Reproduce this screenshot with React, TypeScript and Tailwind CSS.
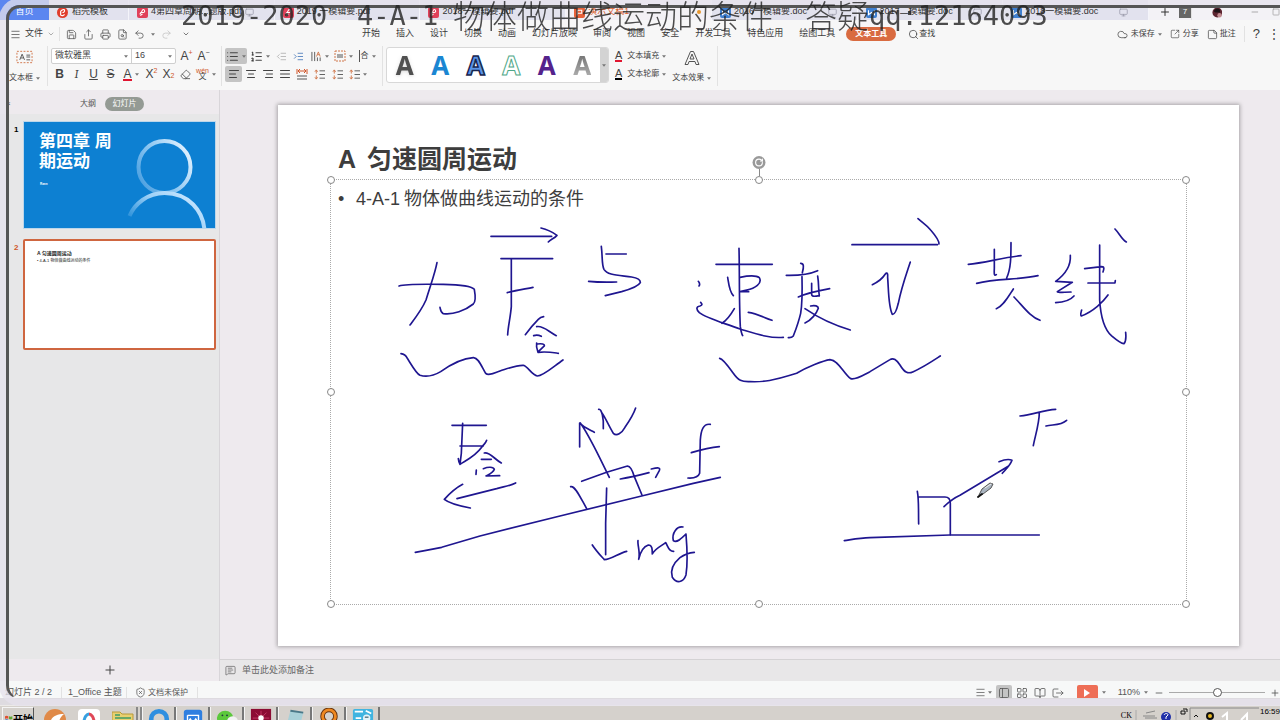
import React, { useState } from "react";
import {
    AlignCenter,
    AlignJustify,
    AlignLeft,
    AlignRight,
    BookOpen,
    ChevronDown,
    Cloud,
    Eraser,
    FileSearch,
    IndentDecrease,
    IndentIncrease,
    LayoutGrid,
    List,
    ListOrdered,
    Menu,
    MessageSquareText,
    Minus,
    Monitor,
    PanelLeft,
    Plus,
    Printer,
    Redo2,
    RotateCw,
    Save,
    Search,
    Share,
    ShieldX,
    Square,
    SquareArrowOutUpRight,
    StickyNote,
    Undo2,
} from "lucide-react";

const DOC_TABS = [
    { kind: "pdf", label: "4第四章周期...题版.pdf", monitor: true },
    { kind: "pdf", label: "2019 一模辑要.pdf", monitor: false },
    { kind: "pdf", label: "2018一模辑要.pdf", monitor: false },
    { kind: "ppt", label: "演示文稿1", monitor: false },
    { kind: "doc", label: "2016一模辑要.doc", monitor: true },
    { kind: "doc", label: "2017二模辑要.doc", monitor: true },
    { kind: "doc", label: "2018一模辑要.doc", monitor: true },
];

const MENUS = [
    "开始", "插入", "设计", "切换", "动画", "幻灯片放映",
    "审阅", "视图", "安全", "开发工具", "特色应用", "绘图工具",
];

const KIND_COLORS: Record<string, string> = {
    pdf: "bg-[#e0405a]",
    ppt: "bg-[#e8623a]",
    doc: "bg-[#3f7fd0]",
};

// Pen strokes, one entry per written area of the slide
const INK = [
    {
        at: "translate(320 140) scale(0.3333)",
        d: [
            "M513 289H695M663 264C680 268 700 278 711 286C702 296 692 298 685 306",
            "M351 368C345 400 335 425 318 480C305 510 285 535 270 555",
            "M237 438C260 431 300 433 370 433C420 434 455 438 463 448C467 470 467 485 460 492C435 512 400 525 370 521C362 517 362 512 360 502",
            "M543 356H698M574 357V500C571 535 564 560 563 585M562 458C590 450 615 447 639 442",
            "M844 319C848 350 845 375 852 388C862 405 890 405 935 411C955 414 962 420 961 428C955 440 930 448 905 455L856 467M858 342H919M806 424C835 427 860 427 890 426",
            "M616 584C630 565 640 553 655 538C660 533 665 531 671 530M650 560C670 556 685 575 709 587M641 587C650 584 658 586 664 589M650 609C648 620 652 632 654 637M652 612C665 610 675 612 673 618L656 634M655 637C680 634 695 637 715 640",
            "M243 641C252 642 257 645 262 655C275 675 288 700 300 706C320 712 340 708 362 695C390 675 430 655 460 653C475 652 485 680 497 700C505 708 520 700 540 693C565 685 590 675 610 676C625 680 635 705 652 708C670 708 700 680 729 660",
        ],
    },
    {
        at: "translate(640 140) scale(0.3333)",
        d: [
            "M636 314H892M834 236C850 250 860 255 872 270C885 285 898 300 897 312",
            "M175 424C180 430 180 434 177 438M182 487C187 492 188 496 180 498C168 500 168 508 178 518C200 535 240 545 300 567C350 582 390 596 430 592",
            "M228 373H397M297 325C299 400 297 480 301 560C303 575 305 582 308 587",
            "M263 412C266 430 268 455 280 467M300 412C320 408 345 403 358 413C368 430 345 445 320 450L300 455L326 455M283 506C275 520 262 540 246 550M325 517C350 520 370 532 396 541",
            "M482 370C492 370 492 380 487 398M439 406C480 407 510 402 533 392M486 410C487 450 487 490 482 520C475 550 465 575 460 588C455 594 450 593 445 593",
            "M515 430V460C514 470 520 470 538 467M533 408C537 430 535 450 538 468M475 471C500 460 535 452 569 446M512 498C525 495 535 498 535 505C530 520 515 540 495 549M495 506C530 530 580 555 631 570",
            "M697 434C712 427 728 415 736 402C742 396 744 400 743 412C746 450 745 500 757 523C765 525 770 510 775 490C785 440 800 400 811 366",
            "M239 655C250 657 262 675 280 700C295 722 305 726 330 725C370 727 400 722 470 700C500 682 550 662 570 659C595 660 610 700 632 716C650 720 670 705 690 695L750 659C760 652 770 660 780 675C795 700 805 702 820 695C850 682 875 665 901 648",
        ],
    },
    {
        at: "translate(930 200) scale(0.3333)",
        d: [
            "M115 193C160 190 220 172 273 167M193 148V205C192 225 193 228 199 224M243 128C243 170 243 205 230 234M140 250C200 235 270 240 324 227M250 267C235 290 220 318 199 326M252 291C280 320 300 350 330 361",
            "M421 166C423 195 410 220 377 244L427 247L382 275C385 279 395 277 423 276M377 308C400 307 420 302 432 288",
            "M464 206L515 200C524 200 522 208 519 216M474 249H555L556 242M509 135V300C512 350 525 390 545 408C565 425 575 432 582 431C590 422 588 410 587 397M534 285C520 305 490 335 454 348C450 345 453 338 455 330M555 87C568 100 575 118 589 126",
        ],
    },
    {
        at: "translate(400 390) scale(0.3333)",
        d: [
            "M156 106H259M188 100L184 190L180 223M175 206C176 215 178 220 180 223C200 210 225 200 245 172C252 162 257 160 260 151M180 168H250M253 189C270 186 280 205 304 219M244 208H274M229 240L228 253M250 236C265 230 280 230 283 238C280 248 270 252 258 258L299 257",
            "M347 279C330 288 310 290 290 296L171 326M188 283C165 295 145 315 133 328C150 342 180 348 211 354",
            "M46 487C70 482 90 480 125 472L240 438L480 378L725 318L880 280L961 262",
            "M628 262L600 205C580 165 560 125 541 99M539 171V99C555 115 570 120 583 127",
            "M596 58C605 55 612 85 610 116M604 66C615 80 625 105 640 130C650 140 665 130 675 112C690 90 700 75 707 54",
            "M545 274L620 247L680 229C690 226 697 240 703 260L726 315M512 290C525 286 540 320 560 356M661 267C690 262 720 255 747 248M754 237C775 232 782 232 778 242L767 262",
            "M620 294L617 400V494M577 465C590 485 605 500 613 509C635 508 655 490 680 484",
            "M714 452C712 465 722 490 716 508C720 490 730 470 745 465C757 465 757 478 757 492C765 475 785 468 797 458C803 465 805 485 821 484",
            "M849 411C830 408 815 430 820 452C830 460 845 445 858 432C862 480 862 530 858 555C850 578 830 582 817 562C810 540 820 520 840 503C855 492 870 488 883 487",
            "M931 103C910 100 903 120 901 150L899 250C895 262 880 265 864 264M874 188C900 180 930 172 958 170",
        ],
    },
    {
        at: "translate(820 390) scale(0.3333)",
        d: [
            "M600 78C640 74 670 60 707 58M658 68C658 100 645 140 640 167M678 108C700 103 722 107 740 91",
            "M372 350C390 333 400 325 420 316L480 280L566 228M537 215C555 208 570 208 576 211C570 228 557 238 547 250",
            "M292 304C297 330 295 360 296 402M296 321H375C388 321 391 330 391 340V434",
            "M73 452C100 448 120 444 150 443L390 435H658",
        ],
    },
];

const Caret = () => (
    <svg viewBox="0 0 6 4" className="w-1 h-[3px] shrink-0" fill="#777">
        <path d="M0 0h6L3 4z" />
    </svg>
);

const Divider = () => <span className="w-px self-stretch bg-[#e2e2e2] shrink-0" />;

const WpsMark = ({ kind }: { kind: string }) => (
    <span className={`w-[11px] h-[11px] rounded-[2px] flex items-center justify-center shrink-0 ${KIND_COLORS[kind]}`}>
        <svg viewBox="0 0 12 12" className="w-[9px] h-[9px]" fill="none" stroke="#fff" strokeWidth="1.4">
            {kind === "doc" ? (
                <path d="M2 3v6l4-3 4 3V3" />
            ) : kind === "ppt" ? (
                <path d="M3 10V3h6v4H3" />
            ) : (
                <path d="M2 8c3 0 3-6 5-6s3 4 0 4H3M3 10l3-2" />
            )}
        </svg>
    </span>
);

const TabBar = () => (
    <div className="h-5 flex items-stretch text-[9px] bg-[#e2e2ee] text-[#333] shrink-0">
        <button className="w-[49px] bg-[#5b86f0] text-white flex items-center justify-center pt-1">首页</button>
        <button className="w-20 flex items-center gap-1 pl-2 pt-1 border-r border-[#f4f4fa] whitespace-nowrap">
            <svg viewBox="0 0 12 12" className="w-[11px] h-[11px]">
                <circle cx="6" cy="6" r="6" fill="#e03c2c" />
                <path d="M4 9V5c0-1 3-3 4-2 1 2-1 3-2 3M4 9c2 1 4 0 4-1" stroke="#fff" strokeWidth="1.3" fill="none" />
            </svg>
            稻壳模板
        </button>
        {DOC_TABS.map(({ kind, label, monitor }) => (
            <button
                key={label}
                className={`flex-1 min-w-0 flex items-center gap-[3px] pl-2 pt-1 border-r border-[#f4f4fa] whitespace-nowrap ${kind === "ppt" ? "bg-[#f3f0f5] text-[#d9622f]" : ""
                    }`}>
                <WpsMark kind={kind} />
                <span className="flex-1 text-left">{label}</span>
                {monitor && <Monitor className="w-[9px] h-[9px] text-[#99a] mr-5" />}
                {kind === "ppt" && <span className="w-1 h-1 rounded-full bg-[#e8962f] mr-2.5" />}
            </button>
        ))}
        <div className="w-[131px] bg-[#f3f2f6] flex items-center pt-1 pl-2.5">
            <button title="新建"><Plus className="w-3 h-3" /></button>
            <span className="ml-2 w-3 h-[11px] bg-[#666] text-white text-[8px] flex items-center justify-center">7</span>
            <Divider />
            <svg viewBox="0 0 12 12" className="w-[11px] h-[11px] ml-5">
                <circle cx="6" cy="6" r="5.5" fill="#5b2430" />
                <path d="M2 5a4 4 0 0 1 7-2v3H4z" fill="#1c1216" />
                <circle cx="8.500" cy="9" r="2.500" fill="#c08a90" />
            </svg>
            <Minus className="w-2.5 h-2.5 ml-7 text-[#999]" />
            <Square className="w-2 h-2 ml-3 text-[#999] shrink-0" />
        </div>
    </div>
);

const MenuBar = () => (
    <div className="h-[26px] flex items-center pt-[2px] text-[9px] text-[#3c3c3c] bg-[#f7f7f7] whitespace-nowrap shrink-0">
        <div className="w-[347px] flex items-center pl-2.5 shrink-0">
            <button className="flex items-center gap-1 w-[49px]">
                <Menu className="w-[11px] h-[11px]" strokeWidth={1.5} />
                文件
                <ChevronDown className="w-2 h-2 text-[#888]" />
            </button>
            <Divider />
            <div className="flex items-center gap-[6px] pl-1.5">
                {[Save, Share, Printer, FileSearch, Undo2].map((Icon, i) => (
                    <button key={i}><Icon className="w-[11px] h-[11px] text-[#555]" strokeWidth={1.7} /></button>
                ))}
                <Caret />
                <Redo2 className="w-[11px] h-[11px] text-[#c4c4c4]" strokeWidth={1.7} />
                <ChevronDown className="w-2 h-2 ml-1" />
            </div>
        </div>
        <nav className="flex items-center gap-4 pl-[15px]">
            {MENUS.map((menu) => (
                <button key={menu}>{menu}</button>
            ))}
        </nav>
        <button className="w-[50px] h-3.5 ml-[11px] rounded-full bg-[#d96b40] text-white font-bold text-[8px] leading-[14px]">
            文本工具
        </button>
        <button className="flex items-center ml-3 text-[8px]">
            <Search className="w-[11px] h-[11px]" strokeWidth={1.6} />
            查找
        </button>
        <div className="flex-1 flex items-center justify-end gap-2 text-[8px]">
            <button className="flex items-center gap-[3px]"><Cloud className="w-[11px] h-[11px]" strokeWidth={1.5} />未保存<Caret /></button>
            <button className="flex items-center gap-[3px]"><SquareArrowOutUpRight className="w-[10px] h-[10px]" strokeWidth={1.5} />分享</button>
            <button className="flex items-center gap-[2px]"><StickyNote className="w-[11px] h-[11px]" strokeWidth={1.5} />批注</button>
            <Divider />
            <button className="text-[13px] leading-4">?</button>
            <button className="text-[12px] leading-4">⋮</button>
        </div>
    </div>
);

const tool = "h-4 flex items-center justify-center gap-[3px] shrink-0";
const lucide = "w-[13px] h-[13px]";

const SpacingIcon = () => (
    <svg viewBox="0 0 12 12" className="w-[11px] h-[11px]" fill="none">
        <path d="M6 2h6M6 6h6M6 10h6" stroke="#555" />
        <path d="M2.500 1v4M1 3l1.500-2L4 3M2.500 7v4M1 9l1.500 2L4 9" stroke="#d0764a" />
    </svg>
);

const FontTools = () => (
    <div className="w-[173px] pl-[3px] flex flex-col gap-[2px] pt-[2px] shrink-0">
        <div className="flex items-center">
            <div className="flex h-4 bg-white border border-[#cfcfcf] rounded-[2px] text-[9px]">
                <select aria-label="字体" className="appearance-none w-[72px] pl-[3px] outline-none">
                    <option>微软雅黑</option>
                </select>
                <span className="flex items-center pr-[3px]"><Caret /></span>
                <select aria-label="字号" className="appearance-none w-[37px] pl-[3px] border-l border-[#cfcfcf] outline-none">
                    <option>16</option>
                </select>
                <span className="flex items-center pr-[3px]"><Caret /></span>
            </div>
            <button className={`${tool} w-[17px] ml-[2px] text-[12px]`}>A<sup className="text-[7px] text-[#d0562a] -ml-[3px]">+</sup></button>
            <button className={`${tool} w-[17px] text-[12px]`}>A<sup className="text-[7px] -ml-[3px]">−</sup></button>
        </div>
        <div className="flex items-center text-[12px] text-[#444]">
            <button className={`${tool} w-[17px] font-bold`}>B</button>
            <button className={`${tool} w-[17px] italic font-serif`}>I</button>
            <button className={`${tool} w-[17px] underline`}>U</button>
            <button className={`${tool} w-[17px] line-through`}>S</button>
            <button className={`${tool} w-6`}>
                <span className="h-[13px] leading-[12px] border-b-2 border-[#e01530]">A</span>
                <Caret />
            </button>
            <button className={`${tool} w-[17px]`}>X<sup className="text-[7px] text-[#d0562a] -ml-[3px]">2</sup></button>
            <button className={`${tool} w-[17px]`}>X<sub className="text-[7px] text-[#d0562a] -ml-[3px]">2</sub></button>
            <button className={`${tool} w-[17px]`}><Eraser className="w-[11px] h-[11px]" strokeWidth={1.7} /></button>
            <button className={`${tool} w-6`}>
                <span className="flex flex-col items-center text-[8px] leading-[7px]">
                    <span className="text-[#d0562a] text-[7px] leading-[5px]">wén</span>
                    文
                </span>
                <Caret />
            </button>
        </div>
    </div>
);

const ParagraphTools = () => (
    <div className="w-[160px] pl-[3px] flex flex-col gap-[2px] pt-[2px] text-[#444] shrink-0">
        <div className="flex items-center">
            <button className={`${tool} w-[22px] bg-[#c4c4c4] rounded-[2px]`}><List className={lucide} strokeWidth={2} /><Caret /></button>
            <button className={`${tool} w-[26px]`}><ListOrdered className={lucide} strokeWidth={2} /><Caret /></button>
            <button className={`${tool} w-[17px] text-[#aaa]`}><IndentDecrease className="w-[11px] h-[11px]" strokeWidth={1.7} /></button>
            <button className={`${tool} w-[17px] text-[#3a6fb5]`}><IndentIncrease className="w-[11px] h-[11px]" strokeWidth={1.7} /></button>
            <button className={`${tool} w-[25px]`}>
                <svg viewBox="0 0 12 12" className="w-[11px] h-[11px]" fill="none" stroke="#555">
                    <path d="M1 1v10M4 1v10M7 7v4M10 7v4" />
                    <path d="M6 6l2-5 2 5M7 4h2" stroke="#d0764a" />
                </svg>
                <Caret />
            </button>
            <button className={`${tool} w-[23px]`}>
                <svg viewBox="0 0 12 12" className="w-3 h-3" fill="none" stroke="#d0764a">
                    <rect x="1" y="1" width="10" height="10" strokeDasharray="2 1" />
                    <path d="M3 5h6M3 7h6" stroke="#555" />
                </svg>
                <Caret />
            </button>
            <button className={`${tool} w-6 text-[8px]`}>
                <span className="border-l border-[#555] pl-px leading-3">合</span>
                <Caret />
            </button>
        </div>
        <div className="flex items-center">
            <button className={`${tool} w-[17px] bg-[#c4c4c4] rounded-[2px]`}><AlignLeft className="w-3 h-3" strokeWidth={2} /></button>
            {[AlignCenter, AlignRight, AlignJustify].map((Icon, i) => (
                <button key={i} className={`${tool} w-[17px]`}><Icon className="w-3 h-3" strokeWidth={2} /></button>
            ))}
            <button className={`${tool} w-[17px]`}>
                <svg viewBox="0 0 12 12" className="w-3 h-3" fill="none" stroke="#555">
                    <path d="M1 8h10M1 11h10" />
                    <path d="M1 1v5M11 1v5M2 3h8M4 1L2 3l2 2M8 1l2 2-2 2" stroke="#d0562a" />
                </svg>
            </button>
            <button className={`${tool} w-[18px]`}><SpacingIcon /></button>
            <button className={`${tool} w-[18px]`}><SpacingIcon /></button>
            <button className={`${tool} w-6`}><SpacingIcon /><Caret /></button>
        </div>
    </div>
);

const glyph = "text-[26px] leading-8 font-bold font-['Noto_Sans']";

const WordArt = () => (
    <div className="flex h-9 mt-px mx-[3px] w-[223px] bg-white border border-[#d8d8d8] rounded-[3px] shrink-0">
        <div className="flex-1 flex items-center justify-around">
            <button className={`${glyph} text-[#505050] drop-shadow`}>A</button>
            <button className={`${glyph} text-[#1b86d2]`}>A</button>
            <button className={`${glyph} text-[#5b95e8] [-webkit-text-stroke:1.5px_#17264f]`}>A</button>
            <button className={`${glyph} text-white [-webkit-text-stroke:1px_#4fa888]`}>A</button>
            <button className={`${glyph} text-[#54238c]`}>A</button>
            <button className={`${glyph} bg-linear-to-b from-[#666] to-[#bbb] bg-clip-text text-transparent`}>A</button>
        </div>
        <button className="w-2 bg-[#d3d3d3] rounded-r-[2px] flex items-center justify-center"><Caret /></button>
    </div>
);

const Ribbon = () => (
    <div className="h-11 flex text-[8px] text-[#444] bg-[#f7f7f7] pb-1 whitespace-nowrap shrink-0">
        <button className="w-[47px] pl-[2px] flex flex-col items-center justify-between pt-1 pb-[2px] shrink-0">
            <svg viewBox="0 0 18 14" className="w-[17px] h-3.5" fill="none" stroke="#555">
                <rect x="1" y="1" width="16" height="12" stroke="#d0764a" strokeDasharray="2 1.500" />
                <path d="M4 10l2.500-6L9 10M5 8h3M11 5h4M11 7h4M11 10h4" />
            </svg>
            <span className="flex items-center gap-[3px]">文本框<Caret /></span>
        </button>
        <Divider />
        <FontTools />
        <Divider />
        <ParagraphTools />
        <Divider />
        <WordArt />
        <div className="flex flex-col gap-[2px] pt-[2px] pl-[3px] shrink-0">
            <button className={tool}>
                <span className="text-[11px] leading-[10px] border-b-2 border-[#e01530]">A</span>
                <span className="ml-[2px]">文本填充</span>
                <Caret />
            </button>
            <button className={tool}>
                <span className="text-[11px] leading-[10px] border-b-2 border-black">A</span>
                <span className="ml-[2px]">文本轮廓</span>
                <Caret />
            </button>
        </div>
        <button className="flex flex-col items-center justify-between pt-1 pb-[2px] px-1.5 shrink-0">
            <svg viewBox="0 0 16 16" className="w-4 h-4" fill="none" stroke="#555">
                <path d="M1 14.500L6.500 1.500h3L15 14.500h-3L11 11.500H5L4 14.500zM6 9h4L8 4z" />
            </svg>
            <span className="flex items-center gap-[3px]">文本效果<Caret /></span>
        </button>
        <Divider />
    </div>
);

const SlidePanel = () => (
    <aside className="w-[220px] flex flex-col border-r border-[#d8d5d9] shrink-0">
        <div className="h-6 flex items-center text-[8px] text-[#555] pt-1">
            <button className="pl-[6px] w-20 text-left" title="关闭">×</button>
            <button className="w-[25px] text-left">大纲</button>
            <button className="w-[39px] h-3.5 rounded-full bg-[#949a94] text-white leading-[14px]">幻灯片</button>
        </div>
        <ol className="flex-1 bg-[#e7e7e8] pt-[7px] pl-3 pr-[3px] flex flex-col gap-[10px]">
            <li className="flex">
                <span className="w-[11px] pl-[2px] text-[8px] leading-[18px] font-bold">1</span>
                <div className="flex-1 h-[108px] border border-[#bcd6ea] bg-[#0d80d2] text-white relative overflow-hidden">
                    <svg viewBox="0 0 190 106" className="absolute inset-0 w-full h-full" fill="none" strokeWidth="4">
                        <defs>
                            <linearGradient id="ring" x1="0" y1="0.8" x2="1" y2="0.2">
                                <stop offset="0" stopColor="#4a9fe0" />
                                <stop offset="0.4" stopColor="#84c2f0" />
                                <stop offset="1" stopColor="#e2f2ff" />
                            </linearGradient>
                            <linearGradient id="arc" x1="0" y1="1" x2="1" y2="0.3">
                                <stop offset="0.05" stopColor="#0d80d2" />
                                <stop offset="0.6" stopColor="#9bcff6" />
                                <stop offset="1" stopColor="#c8e6ff" />
                            </linearGradient>
                        </defs>
                        <circle cx="140" cy="45" r="26" stroke="url(#ring)" />
                        <path d="M105 94C110 82 123 71 140 71c24 0 39 18 40 38" stroke="url(#arc)" />
                    </svg>
                    <h2 className="pl-[15px] pt-2.5 w-[101px] text-[17px] leading-5 font-bold">第四章 周期运动</h2>
                    <p className="pl-4 pt-1 text-[3px] leading-4 font-bold">Rann</p>
                </div>
            </li>
            <li className="flex">
                <span className="w-[11px] pl-[2px] text-[8px] leading-[18px] font-bold text-[#d0562a]">2</span>
                <div className="flex-1 h-[111px] border-2 border-[#cf6640] rounded-[2px] bg-white pl-3 pt-2 text-[#222]">
                    <h3 className="text-[5px] leading-2 font-bold">A 匀速圆周运动</h3>
                    <p className="text-[4px] leading-2">• 4-A-1 物体做曲线运动的条件</p>
                </div>
            </li>
        </ol>
        <button className="h-[22px] flex items-center justify-center" title="新建幻灯片">
            <Plus className="w-3.5 h-3.5 text-[#444]" strokeWidth={1.7} />
        </button>
    </aside>
);

const HANDLES = [
    "-left-1 -top-1",
    "left-1/2 -translate-x-1/2 -top-1",
    "-right-1 -top-1",
    "-left-1 top-1/2 -translate-y-1/2",
    "-right-1 top-1/2 -translate-y-1/2",
    "-left-1 -bottom-1",
    "left-1/2 -translate-x-1/2 -bottom-1",
    "-right-1 -bottom-1",
];

const Slide = () => (
    <div className="relative w-full aspect-[961/541] bg-white shadow-[0_0_4px_1px_rgba(0,0,0,0.3)] flex flex-col px-[52px] pb-[41px] text-[#3d3d3d]">
        <h1 className="h-[74px] pl-2 pt-9 text-[25px] leading-9 font-bold">
            <span className="mr-1">A</span> 匀速圆周运动
        </h1>
        <div className="relative flex-1 border border-dotted border-[#aaa]">
            {HANDLES.map((pos) => (
                <span key={pos} className={`absolute w-2 h-2 rounded-full bg-white border border-[#888] ${pos}`} />
            ))}
            <span className="absolute left-1/2 -translate-x-1/2 -top-6 w-[13px] h-[13px] rounded-full bg-[#999] flex items-center justify-center">
                <RotateCw className="w-[9px] h-[9px] text-white" strokeWidth={3} />
            </span>
            <span className="absolute left-1/2 -top-[11px] w-px h-[7px] bg-[#888]" />
            <ul className="pl-[7px] pt-[7px]">
                <li className="flex text-[18px] leading-6">
                    <span className="w-[18px]">•</span>
                    <span className="mr-1">4-A-1</span>
                    <span>物体做曲线运动的条件</span>
                </li>
            </ul>
        </div>
        <svg viewBox="278 105 961 541" className="absolute inset-0 w-full h-full" fill="none" stroke="#1f1690" strokeWidth="5" strokeLinecap="round" strokeLinejoin="round">
            {INK.map(({ at, d }) => (
                <g key={at} transform={at}>
                    {d.map((stroke) => <path key={stroke} d={stroke} />)}
                </g>
            ))}
            {/* pen cursor */}
            <g strokeWidth="1">
                <path d="M979 495l3-6 8-6 3 1-2 4-8 6z" fill="#a9b4c0" stroke="#555" />
                <path d="M985 488l6-4" stroke="#eee" />
                <path d="M978 497l4-3" stroke="#111" strokeWidth="2" />
            </g>
        </svg>
    </div>
);

const StatusBar = () => {
    const [zoom, setZoom] = useState(110);
    return (
        <footer className="h-[17px] flex items-center text-[9px] text-[#555] bg-[#f7f8f8] pt-1.5 whitespace-nowrap shrink-0">
            <span className="w-[61px] pl-[5px]">幻灯片 2 / 2</span>
            <Divider />
            <span className="w-16 pl-1.5">1_Office 主题</span>
            <Divider />
            <span className="w-[70px] pl-2 flex items-center gap-[2px] text-[8px]">
                <ShieldX className="w-[11px] h-[11px]" strokeWidth={1.6} />
                文档未保护
            </span>
            <Divider />
            <div className="flex-1 flex items-center justify-end">
                <Menu className="w-[11px] h-[11px] mr-[2px]" strokeWidth={1.6} />
                <Caret />
                <button className="w-4 h-[15px] ml-1 bg-[#c4c4c4] rounded-[2px] flex items-center justify-center"><PanelLeft className="w-3 h-3" strokeWidth={1.6} /></button>
                <button className="ml-1"><LayoutGrid className="w-3 h-3" strokeWidth={1.6} /></button>
                <button className="ml-1.5"><BookOpen className="w-3 h-3" strokeWidth={1.6} /></button>
                <button className="ml-1.5"><Share className="w-3 h-3 rotate-90" strokeWidth={1.6} /></button>
                <button className="w-[21px] h-[15px] ml-[13px] mr-1 bg-[#ee6e56] rounded-t-[2px] flex items-center justify-center" title="放映">
                    <svg viewBox="0 0 8 8" className="w-2 h-2" fill="#fff"><path d="M1 0l6 4-6 4z" /></svg>
                </button>
                <Caret />
                <span className="ml-3 mr-1">{zoom}%</span>
                <Caret />
                <Minus className="w-2.5 h-2.5 ml-1.5" />
                <input
                    type="range"
                    aria-label="缩放"
                    min={10}
                    max={210}
                    value={zoom}
                    onChange={(e) => setZoom(Number(e.target.value))}
                    className="w-24 h-3 mx-[5px] appearance-none bg-transparent [&::-webkit-slider-runnable-track]:h-px [&::-webkit-slider-runnable-track]:bg-[#aaa] [&::-webkit-slider-thumb]:appearance-none [&::-webkit-slider-thumb]:w-[9px] [&::-webkit-slider-thumb]:h-[9px] [&::-webkit-slider-thumb]:-mt-1 [&::-webkit-slider-thumb]:rounded-full [&::-webkit-slider-thumb]:bg-white [&::-webkit-slider-thumb]:border [&::-webkit-slider-thumb]:border-[#555]"
                />
                <Plus className="w-2.5 h-2.5" />
            </div>
        </footer>
    );
};

const APPS = [
    <circle key="qb" cx="12" cy="12" r="8.500" fill="none" stroke="#2f8fe0" strokeWidth="5" />,
    <g key="wps">
        <rect x="2" y="2" width="20" height="20" rx="3" fill="#2f7fe0" />
        <path d="M6 8v8l3-4 3 4 3-4 3 4V8H6" stroke="#fff" strokeWidth="1.5" fill="none" />
    </g>,
    <g key="wx">
        <ellipse cx="10" cy="11" rx="9" ry="8" fill="#5cc83c" />
        <ellipse cx="18" cy="15" rx="6" ry="6" fill="#f2f2f2" />
        <circle cx="7" cy="8" r="1" fill="#234" />
        <circle cx="12" cy="8" r="1" fill="#234" />
    </g>,
    <g key="sun">
        <rect x="1" y="1" width="22" height="23" fill="#8c0c34" />
        <path d="M12 3v18M3 11h18M6 5l12 12M18 5L6 17" stroke="#c83c68" />
        <circle cx="12" cy="11" r="3" fill="#fff" />
    </g>,
    <g key="note">
        <path d="M7 3l14 2-4 16L3 18z" fill="#a8d0d8" />
        <path d="M7 3l14 2" stroke="#4a7888" strokeWidth="2" />
    </g>,
    <g key="ring" fill="none">
        <circle cx="12" cy="9" r="7" stroke="#663310" strokeWidth="5" />
        <circle cx="12" cy="9" r="7" stroke="#ee8820" strokeWidth="3" />
    </g>,
    <g key="live">
        <rect x="1" y="1" width="22" height="23" rx="2" fill="#40b4e0" />
        <path d="M3 4h9M15 3l6 3M4 11h6" stroke="#fff" strokeWidth="2" />
        <circle cx="16" cy="11" r="4" fill="#e4f4fa" />
        <path d="M14 10h4" stroke="#134" />
    </g>,
];

const Taskbar = () => (
    <div className="flex-1 min-h-0 flex bg-[#d5d1cc] border-t border-[#eceae8] pt-px overflow-hidden">
        <button className="w-8 ml-[2px] pl-0.5 h-6 flex items-center border border-[#f4f4f4] border-r-[#555] text-[10px] font-bold text-black whitespace-nowrap">
            <svg viewBox="0 0 12 12" className="w-2 h-3 shrink-0">
                <path d="M0 2c2-1 3-1 5 0v4C3 5 2 5 0 6z" fill="#e05030" />
                <path d="M6 2c2 1 3 1 5 0v4c-2 1-3 1-5 0z" fill="#60a830" />
                <path d="M0 7c2-1 3-1 5 0v4c-2-1-3-1-5 0z" fill="#3070c8" />
                <path d="M6 7c2 1 3 1 5 0v4c-2 1-3 1-5 0z" fill="#e8b820" />
            </svg>
            开始
        </button>
        <div className="flex gap-3 pl-[10px] pt-[2px]">
            <svg viewBox="0 0 22 22" className="w-[22px] h-[22px]">
                <circle cx="11" cy="11" r="11" fill="#e08a48" />
                <path d="M6 16c0-8 6-11 14-11-4 3-6 8-5 13z" fill="#fff" />
            </svg>
            <svg viewBox="0 0 22 22" className="w-[22px] h-[22px]">
                <rect width="22" height="24" rx="4" fill="#fff" />
                <path d="M6 13c0-5 3-8 5-8" stroke="#38a0e0" strokeWidth="3" fill="none" />
                <path d="M16 13c0-5-3-8-5-8" stroke="#e04858" strokeWidth="3" fill="none" />
            </svg>
            <svg viewBox="0 0 22 22" className="w-[22px] h-[22px]">
                <path d="M0 3h8l2 2h11v17H0z" fill="#e8d070" stroke="#b89838" />
                <path d="M3 9h16M3 6h5" stroke="#68a868" strokeWidth="2" />
            </svg>
        </div>
        <span className="w-1.5 ml-0.5 border-x-2 border-[#888] h-6" />
        <div className="flex">
            {APPS.map((app) => (
                <button key={app.key} className="w-[34px] h-6 pt-px border-l border-l-[#f4f4f4] border-r-2 border-r-[#777] flex justify-center items-start">
                    <svg viewBox="0 0 24 24" className="w-[22px] h-[22px] shrink-0">{app}</svg>
                </button>
            ))}
        </div>
        <div className="flex-1 flex justify-end text-[8px] text-black leading-[9px] whitespace-nowrap">
            <span className="pt-1 font-['Liberation_Serif']">CK</span>
            <svg viewBox="0 0 126 14" className="w-[126px] h-3.5 mx-px" fill="none">
                <path d="M3 3v11M43 3v11" stroke="#aaa" />
                <path d="M10 9h12M13 6l9-2M12 11h12" stroke="#888" />
                <circle cx="33" cy="10" r="5" fill="#2030a8" />
                <path d="M31 8c1-2 4-2 4 0l-2 2v2" stroke="#fff" />
                <path d="M48 4h4v3h-4zM50 2h4v3" stroke="#111" />
                <path d="M57 14V1h69" stroke="#888" />
                <path d="M61 10l2-2 2 2" stroke="#111" />
                <circle cx="77" cy="9" r="3" fill="#e8b820" stroke="#111" strokeWidth="2" />
                <path d="M89 10l5-4v8M108 13l6-6v7" stroke="#fff" strokeWidth="2" />
            </svg>
            <span>16:59</span>
        </div>
    </div>
);

// Caption and the rounded frame lie over the whole desktop
const Caption = () => (
    <div className="absolute inset-0 pointer-events-none overflow-hidden">
        <div className="absolute left-[6px] top-[5px] right-0 bottom-[21px] border-l-[3px] border-t-[3px] border-b border-[#555] border-b-transparent rounded-l-[14px] shadow-[0_0_0_7px_rgba(230,226,236,0.75)]" />
        <p className="absolute left-[181px] top-0 h-8 flex items-start text-[#222] opacity-80 whitespace-nowrap text-[27px] leading-8 font-['DejaVu_Sans_Mono']">
            <span className="w-44">2019-2020</span>
            <span className="w-24">4-A-1</span>
            <span className="w-[352px] text-[32px] leading-7 font-['Noto_Sans_CJK_SC'] font-light">物体做曲线运动的条件</span>
            <span className="text-[32px] leading-7 font-['Noto_Sans_CJK_SC'] font-light">答疑</span>
            <span>qq:12164093</span>
        </p>
    </div>
);

const App = () => (
    <div className="relative h-screen flex flex-col overflow-hidden bg-[#eeeaee] font-['Liberation_Sans','Noto_Sans_CJK_SC',sans-serif]">
        <TabBar />
        <MenuBar />
        <Ribbon />
        <div className="flex-1 min-h-0 flex">
            <SlidePanel />
            <main className="flex-1 flex flex-col min-w-0">
                <div className="flex-1 pt-[15px] pl-[58px] pr-[41px] min-h-0">
                    <Slide />
                </div>
                <div className="h-[22px] flex items-center gap-1.5 pl-[5px] border-t border-[#d4d2d4] bg-[#e8e7e8] text-[9px] text-[#666]">
                    <MessageSquareText className="w-[11px] h-[11px]" strokeWidth={1.6} />
                    单击此处添加备注
                </div>
            </main>
        </div>
        <StatusBar />
        <div className="h-[22px] flex flex-col bg-[#dedbe0] pt-[7px] shrink-0">
            <Taskbar />
        </div>
        <Caption />
    </div>
);

export default App;
